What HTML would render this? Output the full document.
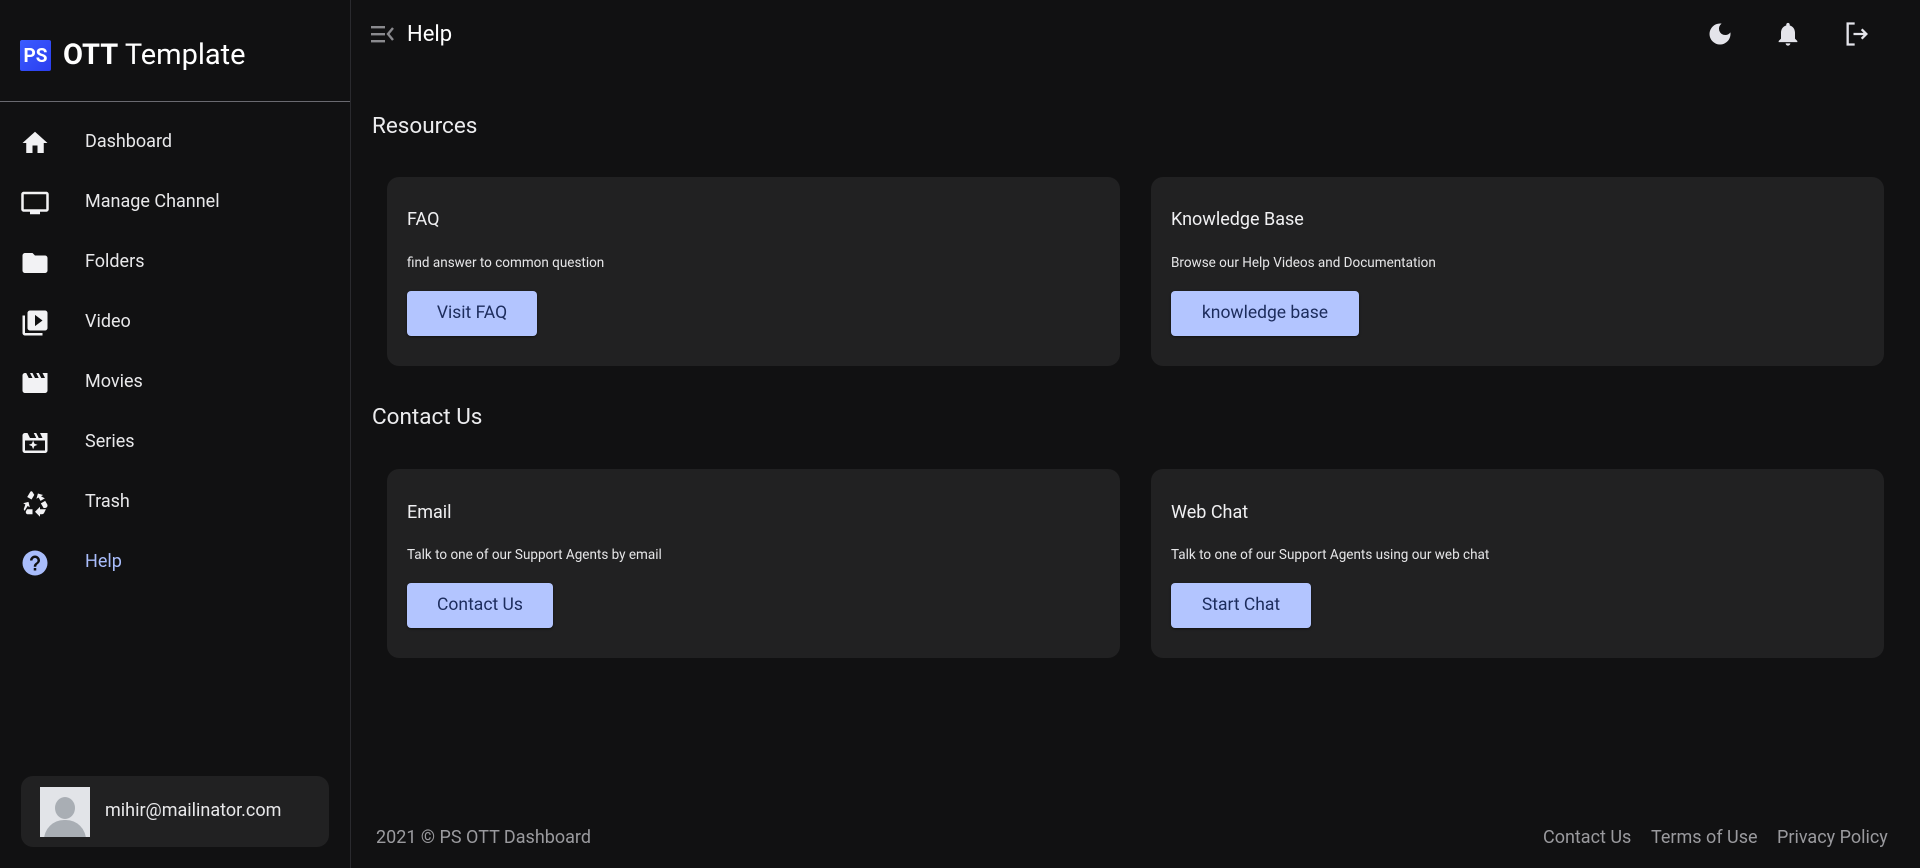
<!DOCTYPE html>
<html><head><meta charset="utf-8"><style>
*{box-sizing:border-box;margin:0;padding:0}
body{width:1920px;height:868px;background:#111112;font-family:Roboto,"Liberation Sans",sans-serif;color:#e8e8ea;position:relative;overflow:hidden}
.abs{position:absolute}
.side{left:0;top:0;width:351px;height:868px;border-right:1px solid #2a2a2e}
.logo{left:20px;top:40px;width:31px;height:31px;background:linear-gradient(135deg,#3b5cff,#2a3ef0);border-radius:2px;color:#fff;font-weight:bold;font-size:19px;text-align:center;line-height:31px}
.brand{left:63px;top:38px;font-size:29px;color:#fff;white-space:nowrap}
.hr{left:0;top:101px;width:350px;height:1px;background:#6a6a70}
.nav{left:0;width:350px;height:40px}
.nav svg{position:absolute;left:20px;top:6px;width:30px;height:30px;fill:#f2f2f4}
.nav span{position:absolute;left:85px;top:9px;font-size:18px;color:#e8e8ea}
.hdr{left:407px;top:22px;font-size:22px;color:#fff}
h2{position:absolute;font-weight:normal;font-size:22.5px;color:#ececee}
.card{position:absolute;width:733px;height:189px;background:#212122;border-radius:12px}
.card .t{position:absolute;left:20px;top:32px;font-size:18px;color:#f0f0f2}
.card .desc{position:absolute;left:20px;top:78px;font-size:13.5px;color:#e6e6e8}
.card .b{position:absolute;left:20px;top:114px;height:45px;background:#b3c5ff;border-radius:4px;color:#1c2c5c;font-size:17.5px;line-height:45px;text-align:center;box-shadow:0 1px 2px rgba(0,0,0,.5)}
.foot{top:827px;font-size:18px;color:#9a9a9e}
</style></head><body>
<div class="abs side"></div>
<div class="abs logo">PS</div>
<div class="abs brand"><b>OTT</b> Template</div>
<div class="abs hr"></div>

<div class="abs nav" style="top:122px"><svg viewBox="0 0 24 24"><path d="M10 20v-6h4v6h5v-8h3L12 3 2 12h3v8z"/></svg><span>Dashboard</span></div>
<div class="abs nav" style="top:182px"><svg viewBox="0 0 24 24"><path d="M21 3H3c-1.1 0-2 .9-2 2v12c0 1.1.9 2 2 2h5v2h8v-2h5c1.1 0 2-.9 2-2V5c0-1.1-.9-2-2-2zm0 14H3V5h18v12z"/></svg><span>Manage Channel</span></div>
<div class="abs nav" style="top:242px"><svg viewBox="0 0 24 24"><path d="M10 4H4c-1.1 0-2 .9-2 2v12c0 1.1.9 2 2 2h16c1.1 0 2-.9 2-2V8c0-1.1-.9-2-2-2h-8l-2-2z"/></svg><span>Folders</span></div>
<div class="abs nav" style="top:302px"><svg viewBox="0 0 24 24"><path d="M4 6H2v14c0 1.1.9 2 2 2h14v-2H4V6zm16-4H8c-1.1 0-2 .9-2 2v12c0 1.1.9 2 2 2h12c1.1 0 2-.9 2-2V4c0-1.1-.9-2-2-2zm-8 12.5v-9l6 4.5-6 4.5z"/></svg><span>Video</span></div>
<div class="abs nav" style="top:362px"><svg viewBox="0 0 24 24"><path d="M18 4l2 4h-3l-2-4h-2l2 4h-3l-2-4H8l2 4H7L5 4H4c-1.1 0-2 .9-2 2v12c0 1.1.9 2 2 2h16c1.1 0 2-.9 2-2V4h-4z"/></svg><span>Movies</span></div>
<div class="abs nav" style="top:422px"><svg viewBox="0 0 24 24"><path d="M20 4h-4l2 4h-3l-2-4h-2l2 4H8L6 4H4c-1.1 0-2 .9-2 2v12c0 1.1.9 2 2 2h16c1.1 0 2-.9 2-2V4zm0 14H4V10h16v8zm-9.5-1l1-2.5 2.5-1-2.5-1-1-2.5-1 2.5-2.5 1 2.5 1z"/></svg><span>Series</span></div>
<div class="abs nav" style="top:482px"><svg viewBox="0 0 24 24"><path d="M5.77 7.15L7.2 4.78l1.03-1.71c.39-.65 1.33-.65 1.72 0l1.48 2.46-1.23 2.06-1 1.62-3.43-2.06zm15.95 5.82l-1.6-2.66-3.46 2L18.87 16H20c.76 0 1.45-.43 1.79-1.11.14-.28.21-.58.21-.89 0-.36-.1-.71-.28-1.03zM16 21h1.5c.76 0 1.45-.43 1.79-1.11L20.74 17H16v-2l-4 4 4 4v-2zm-6-4H5.7l-.84 1.41c-.3.5-.32 1.12-.06 1.65.31.64.97 1.03 1.68.94H10v-4zm-3.88-2.65l1.73 1-1.07-4.22-4.22 1.07 1.73 1L3.27 16.1c-.43.7-.21 1.62.49 2.05l2.36-3.8zM16.8 6.6l1.7-1-4.17-1.2-1.2 4.2 1.73-1 1.57 2.65 3.47-2L16.8 6.6z"/></svg><span>Trash</span></div>
<div class="abs nav" style="top:542px"><svg viewBox="0 0 24 24" style="fill:#a9bdfb"><circle cx="12" cy="12" r="10"/><path d="M11 18h2v-2h-2v2zm1-12c-2.2 0-4 1.8-4 4h2c0-1.1.9-2 2-2s2 .9 2 2c0 2-3 1.75-3 5h2c0-2.25 3-2.5 3-5 0-2.2-1.8-4-4-4z" fill="#111"/></svg><span style="color:#a9bdfb">Help</span></div>

<div class="abs" style="left:21px;top:776px;width:308px;height:71px;background:#212122;border-radius:12px"></div>
<div class="abs" style="left:40px;top:787px;width:50px;height:50px;background:#e2e4e8;overflow:hidden"><div class="abs" style="left:15px;top:10px;width:20px;height:22px;border-radius:50%;background:#a9aeb4"></div><div class="abs" style="left:4px;top:33px;width:42px;height:30px;border-radius:20px 20px 0 0;background:#a9aeb4"></div></div>
<div class="abs" style="left:105px;top:800px;font-size:18px;color:#e8e8ea">mihir@mailinator.com</div>

<svg class="abs" style="left:371px;top:24px" width="24" height="20" viewBox="0 0 24 20"><g fill="#8a8a8e"><rect x="0" y="2" width="14" height="2.4"/><rect x="0" y="9" width="14" height="2.4"/><rect x="0" y="16" width="14" height="2.4"/><path d="M22 4l-5 6 5 6" stroke="#8a8a8e" stroke-width="2.4" fill="none"/></g></svg>
<div class="abs hdr">Help</div>

<svg class="abs" style="left:1706px;top:20px" width="28" height="28" viewBox="0 0 24 24"><path fill="#e4e4ea" d="M12 3a9 9 0 1 0 9 9c0-.46-.04-.92-.1-1.36a5.39 5.39 0 0 1-4.4 2.26 5.4 5.4 0 0 1-3.14-9.8c-.44-.06-.9-.1-1.36-.1z"/></svg>
<svg class="abs" style="left:1774px;top:20px" width="28" height="28" viewBox="0 0 24 24"><path fill="#e4e4ea" d="M12 22c1.1 0 2-.9 2-2h-4c0 1.1.9 2 2 2zm6-6v-5c0-3.07-1.63-5.64-4.5-6.32V4c0-.83-.67-1.5-1.5-1.5s-1.5.67-1.5 1.5v.68C7.64 5.36 6 7.92 6 11v5l-2 2v1h16v-1l-2-2z"/></svg>
<svg class="abs" style="left:1843px;top:20px" width="28" height="28" viewBox="0 0 24 24"><path fill="none" stroke="#e4e4ea" stroke-width="2" d="M10 3H4v18h6M9 12h11M16 8l4 4-4 4"/></svg>

<h2 style="left:372px;top:113px">Resources</h2>
<div class="card" style="left:387px;top:177px"><div class="t">FAQ</div><div class="desc">find answer to common question</div><div class="b" style="width:130px">Visit FAQ</div></div>
<div class="card" style="left:1151px;top:177px"><div class="t">Knowledge Base</div><div class="desc">Browse our Help Videos and Documentation</div><div class="b" style="width:188px">knowledge base</div></div>
<h2 style="left:372px;top:404px">Contact Us</h2>
<div class="card" style="left:387px;top:469px"><div class="t" style="top:33px">Email</div><div class="desc">Talk to one of our Support Agents by email</div><div class="b" style="width:146px">Contact Us</div></div>
<div class="card" style="left:1151px;top:469px"><div class="t" style="top:33px">Web Chat</div><div class="desc">Talk to one of our Support Agents using our web chat</div><div class="b" style="width:140px">Start Chat</div></div>

<div class="abs foot" style="left:376px">2021 © PS OTT Dashboard</div>
<div class="abs foot" style="left:1543px">Contact Us</div>
<div class="abs foot" style="left:1651px">Terms of Use</div>
<div class="abs foot" style="left:1777px">Privacy Policy</div>
</body></html>
